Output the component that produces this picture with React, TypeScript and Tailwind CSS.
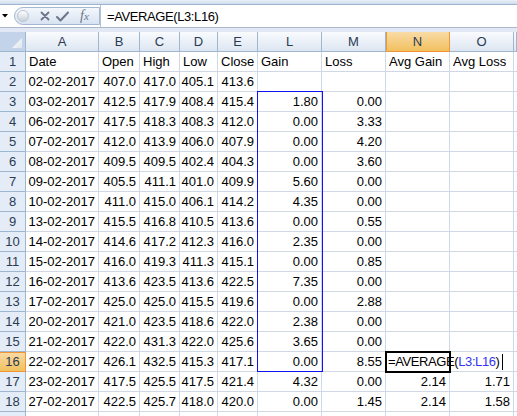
import React from "react";

type Row = string[];

const rows: Row[] = [
  ["Date", "Open", "High", "Low", "Close", "Gain", "Loss", "Avg Gain", "Avg Loss"],
  ["02-02-2017", "407.0", "417.0", "405.1", "413.6", "", "", "", ""],
  ["03-02-2017", "412.5", "417.9", "408.4", "415.4", "1.80", "0.00", "", ""],
  ["06-02-2017", "417.5", "418.3", "408.3", "412.0", "0.00", "3.33", "", ""],
  ["07-02-2017", "412.0", "413.9", "406.0", "407.9", "0.00", "4.20", "", ""],
  ["08-02-2017", "409.5", "409.5", "402.4", "404.3", "0.00", "3.60", "", ""],
  ["09-02-2017", "405.5", "411.1", "401.0", "409.9", "5.60", "0.00", "", ""],
  ["10-02-2017", "411.0", "415.0", "406.1", "414.2", "4.35", "0.00", "", ""],
  ["13-02-2017", "415.5", "416.8", "410.5", "413.6", "0.00", "0.55", "", ""],
  ["14-02-2017", "414.6", "417.2", "412.3", "416.0", "2.35", "0.00", "", ""],
  ["15-02-2017", "416.0", "419.3", "411.3", "415.1", "0.00", "0.85", "", ""],
  ["16-02-2017", "413.6", "423.5", "413.6", "422.5", "7.35", "0.00", "", ""],
  ["17-02-2017", "425.0", "425.0", "415.5", "419.6", "0.00", "2.88", "", ""],
  ["20-02-2017", "421.0", "423.5", "418.6", "422.0", "2.38", "0.00", "", ""],
  ["21-02-2017", "422.0", "431.3", "422.0", "425.6", "3.65", "0.00", "", ""],
  ["22-02-2017", "426.1", "432.5", "415.3", "417.1", "0.00", "8.55", "", ""],
  ["23-02-2017", "417.5", "425.5", "417.5", "421.4", "4.32", "0.00", "2.14", "1.71"],
  ["27-02-2017", "422.5", "425.7", "418.0", "420.0", "0.00", "1.45", "2.14", "1.58"],
  ["", "", "", "", "", "", "", "", ""],
];

const cols = ["A", "B", "C", "D", "E", "L", "M", "N", "O", ""];

const gridCols =
  "grid grid-cols-[26px_73px_41px_40px_38px_40px_64px_64px_64px_64px_1fr]";

function FormulaText() {
  return (
    <>
      <span>=AVERAGE(</span>
      <span className="text-[#3434f0]">L3:L16</span>
      <span>)</span>
    </>
  );
}

export default function App() {
  return (
    <div className="w-[517px] h-[416px] overflow-hidden bg-white font-['Liberation_Sans',Arial,sans-serif] text-black select-none">
      {/* top strip */}
      <div className="h-[5px] bg-gradient-to-b from-[#eaf0f8] to-[#cfdcee] border-b border-[#9fb4cf]" />
      {/* formula bar */}
      <div className="h-[23px] flex items-stretch border-b border-[#a9b8cb] bg-white">
        <div className="w-[14px] flex items-center justify-start pl-[2px]">
          <svg width="6" height="4" viewBox="0 0 6 4">
            <path d="M0 0 H6 L3 3.5 Z" fill="#000" />
          </svg>
        </div>
        <div className="w-[86px] my-[2px] flex items-center rounded-l-[10px] border border-[#a5b7d1] bg-gradient-to-b from-[#f4f7fc] to-[#d8e3f1]">
          <div className="ml-[2px] w-[12px] h-[12px] rounded-full border border-[#b8c3d2] bg-gradient-to-b from-[#ffffff] to-[#c9d0da]" />
          <svg className="ml-[11px]" width="10" height="10" viewBox="0 0 10 10">
            <path d="M1.5 1.5 L8.5 8.5 M8.5 1.5 L1.5 8.5" stroke="#6b7688" strokeWidth="1.8" strokeLinecap="round" />
          </svg>
          <svg className="ml-[6px]" width="13" height="11" viewBox="0 0 13 11">
            <path d="M1 6 L4.5 9.5 L12 1.5" stroke="#6b7688" strokeWidth="2" fill="none" strokeLinejoin="round" strokeLinecap="round" />
          </svg>
          <span className="ml-[11px] font-['Liberation_Serif',serif] italic text-[14px] leading-none text-[#6b7688]">
            f<span className="text-[11px]">x</span>
          </span>
        </div>
        <div className="w-[1px] bg-[#b3c2d6]" />
        <div className="flex-1 flex items-center pl-[6px] text-[13px] tracking-[-0.4px] leading-none pt-[1px]">
          <span>=AVERAGE(L3:L16)</span>
        </div>
      </div>
      <div className="h-[4px] bg-[#e2e9f4]" />
      {/* grid */}
      <div className="relative">
        {/* header row */}
        <div className={`${gridCols} h-[20px]`}>
          <div className="h-[20px] border-r border-b border-[#9eb6ce] bg-[#c3d4ea] flex items-end justify-end p-[2px]">
            <svg width="12" height="12" viewBox="0 0 12 12">
              <defs>
                <linearGradient id="tri" x1="0" y1="0" x2="1" y2="1">
                  <stop offset="0" stopColor="#ffffff" />
                  <stop offset="1" stopColor="#dfe5ee" />
                </linearGradient>
              </defs>
              <path d="M11 1 L11 11 L1 11 Z" fill="url(#tri)" />
            </svg>
          </div>
          {cols.map((c, i) =>
            c === "N" ? (
              <div
                key={i}
                className="h-[20px] border-r border-b border-[#f29536] shadow-[inset_1px_0_0_#f29536] bg-gradient-to-b from-[#f9dba5] to-[#f1c05d] flex items-center justify-center text-[13px] text-[#2b3b52] leading-none"
              >
                {c}
              </div>
            ) : (
              <div
                key={i}
                className="h-[20px] border-r border-b border-[#9eb6ce] bg-gradient-to-b from-[#f9fbfd] to-[#dde6f2] flex items-center justify-center text-[13px] text-[#2b3b52] leading-none"
              >
                {c}
              </div>
            )
          )}
        </div>
        {rows.map((r, ri) => {
          const rowNum = ri + 1;
          const active = rowNum === 16;
          return (
            <div key={ri} className={`${gridCols} h-[20px]`}>
              <div
                className={
                  active
                    ? "h-[20px] border-r border-b border-[#f29536] shadow-[inset_0_1px_0_#f29536] bg-gradient-to-b from-[#f9dba5] to-[#f1c05d] flex items-center justify-center text-[13px] text-[#2b3b52] leading-none"
                    : "h-[20px] border-r border-b border-[#9eb6ce] bg-[#e4ecf7] flex items-center justify-center text-[13px] text-[#2b3b52] leading-none"
                }
              >
                {rowNum <= 18 ? rowNum : ""}
              </div>
              {r.map((v, ci) => {
                const left = rowNum === 1;
                return (
                  <div
                    key={ci}
                    className={`h-[20px] border-r border-b border-[#d0d7e5] text-[13px] leading-[19px] whitespace-nowrap ${
                      left ? "text-left pl-[3px]" : "text-right pr-[3px]"
                    }`}
                  >
                    {active && ci === 7 ? (
                      <div className="relative z-10 text-left pl-[2px] -mr-[80px] tracking-[-0.4px] flex items-center h-[19px]">
                        <FormulaText />
                        <span className="inline-block w-[1px] h-[16px] bg-black ml-[2px]" />
                      </div>
                    ) : (
                      v
                    )}
                  </div>
                );
              })}
              <div className="h-[20px] border-b border-[#d0d7e5]" />
            </div>
          );
        })}
        {/* range highlight L3:L16 */}
        <div className="absolute z-20 left-[257px] top-[59px] w-[66px] h-[281px] border border-[#1010f0] pointer-events-none" />
        {/* active cell N16 */}
        <div className="absolute z-20 left-[385px] top-[319px] w-[66px] h-[22px] border-2 border-black pointer-events-none" />
      </div>
    </div>
  );
}
